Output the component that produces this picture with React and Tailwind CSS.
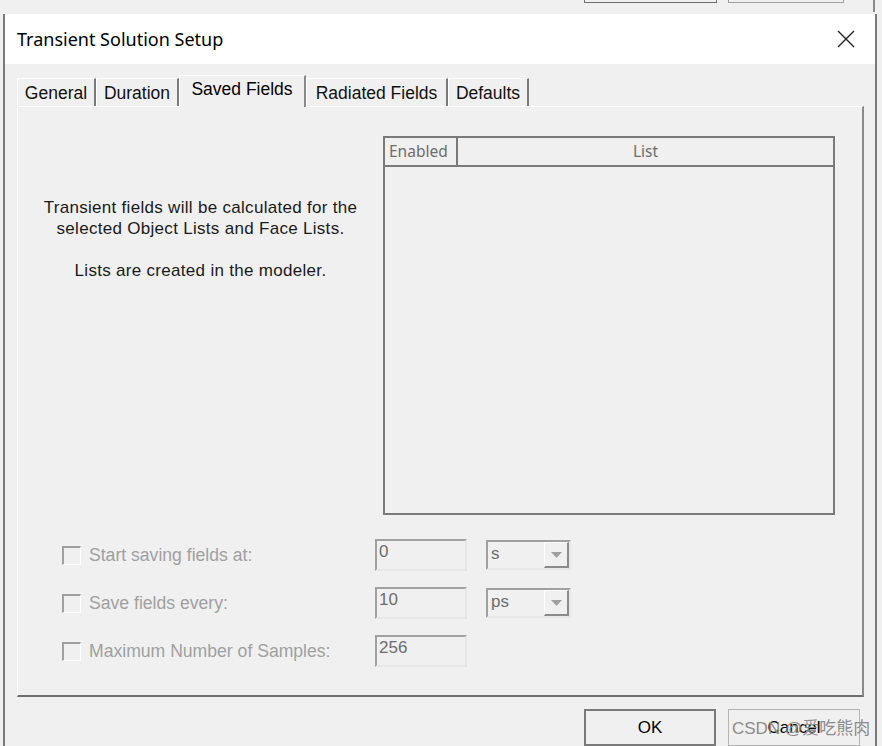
import React from 'react';

const TABS = [
  { label: 'General', w: 'w-[79px]' },
  { label: 'Duration', w: 'w-[83px]' },
  { label: 'Saved Fields', w: 'w-[127px]', active: true },
  { label: 'Radiated Fields', w: 'w-[142px]' },
  { label: 'Defaults', w: 'w-[81px]' },
];

const ROWS = [
  { label: 'Start saving fields at:', value: '0', unit: 's' },
  { label: 'Save fields every:', value: '10', unit: 'ps' },
  { label: 'Maximum Number of Samples:', value: '256' },
];

function Tab({ label, w, active }) {
  if (active) {
    return (
      <div
        className={`${w} h-[32px] -mb-[1px] relative z-10 flex items-center justify-center bg-[#f0f0f0] border-t border-l border-white border-r-2 border-r-[#8a8a8a] text-[17.5px] text-black pb-[4px]`}
      >
        {label}
      </div>
    );
  }
  return (
    <div
      className={`${w} h-[28px] flex items-center justify-center border-t border-l border-white border-r-2 border-r-[#7a7a7a] text-[17.5px] text-[#111] pt-[1px]`}
    >
      {label}
    </div>
  );
}

function Checkbox() {
  return (
    <div className="w-[19px] h-[19px] border-t-2 border-l-2 border-[#a0a0a0] border-b border-r border-b-white border-r-white bg-[#f0f0f0]" />
  );
}

function TextBox({ value }) {
  return (
    <div className="w-[92px] h-[32px] border-t-2 border-l-2 border-[#a0a0a0] border-b-2 border-r-2 border-b-[#e8e8e8] border-r-[#e8e8e8] bg-[#f0f0f0] px-[2px] text-[17px] leading-[22px] text-[#6d6d6d]">
      {value}
    </div>
  );
}

function Combo({ value }) {
  return (
    <div className="w-[85px] h-[30px] flex border-t-2 border-l-2 border-[#a0a0a0] border-b-2 border-r-2 border-b-[#e8e8e8] border-r-[#e8e8e8] bg-[#f0f0f0]">
      <div className="flex-1 pl-[3px] text-[17px] leading-[24px] text-[#6d6d6d]">{value}</div>
      <div className="w-[25px] flex items-center justify-center border-t border-l border-white border-b-2 border-r-2 border-b-[#8a8a8a] border-r-[#8a8a8a]">
        <svg width="11" height="6" viewBox="0 0 11 6">
          <polygon points="0,0 11,0 5.5,6" fill="#a0a0a0" />
        </svg>
      </div>
    </div>
  );
}

export default function App() {
  return (
    <div
      className="w-[882px] h-[746px] overflow-hidden bg-[#f0f0f0] flex flex-col"
      style={{ fontFamily: '"Liberation Sans", Arial, sans-serif' }}
    >
      {/* parent window edge behind the dialog */}
      <div className="h-[14px] flex shrink-0">
        <div className="ml-[584px] w-[133px] h-[3px] border-x border-b border-[#6e6e6e]" />
        <div className="ml-[11px] w-[116px] h-[3px] border-x border-b border-[#a0a0a0]" />
        <div className="ml-[29px] w-[2px] h-[12px] bg-[#8a8a8a]" />
      </div>

      <div className="ml-[3px] w-[874px] flex-1 flex flex-col border-l-2 border-r-2 border-[#7a7a7a]">
        {/* title bar */}
        <div className="h-[50px] shrink-0 bg-white flex items-center justify-between pl-[12px] pr-[20px]">
          <span
            className="text-[18px] text-black"
            style={{ fontFamily: '"Noto Sans", "Open Sans", sans-serif' }}
          >
            Transient Solution Setup
          </span>
          <svg width="18" height="18" viewBox="0 0 18 18">
            <path d="M1 1 L17 17 M17 1 L1 17" stroke="#222" strokeWidth="1.4" fill="none" />
          </svg>
        </div>

        <div className="flex-1 flex flex-col bg-[#f0f0f0] pt-[11px]">
          {/* tabs */}
          <div className="ml-[12px] flex items-end">
            {TABS.map((t) => (
              <Tab key={t.label} {...t} />
            ))}
          </div>

          {/* tab panel */}
          <div className="ml-[12px] w-[847px] h-[591px] border-t border-l border-white border-r-2 border-b-2 border-r-[#8a8a8a] border-b-[#6e6e6e] flex flex-col">
            <div className="flex pt-[29px]">
              <div className="flex-1 pt-[61px] text-center text-[17px] tracking-[0.3px] leading-[21px] text-[#1a1a1a]">
                <p>Transient fields will be calculated for the</p>
                <p>selected Object Lists and Face Lists.</p>
                <p className="mt-[21px]">Lists are created in the modeler.</p>
              </div>
              <div className="mr-[27px] w-[452px] h-[379px] border-2 border-[#7a7a7a] flex flex-col">
                <div
                  className="h-[29px] flex border-b-2 border-[#7a7a7a] text-[15.5px] text-[#6d6d6d]"
                  style={{ fontFamily: '"Noto Sans", "Open Sans", sans-serif' }}
                >
                  <div className="w-[73px] border-r-2 border-[#7a7a7a] flex items-center pl-[4px]">Enabled</div>
                  <div className="flex-1 flex items-center justify-center">List</div>
                </div>
              </div>
            </div>

            <div className="mt-[24px] flex flex-col gap-[16px]">
              {ROWS.map((r) => (
                <div key={r.label} className="h-[32px] flex items-center">
                  <div className="ml-[44px] w-[27px]">
                    <Checkbox />
                  </div>
                  <div className="w-[286px] text-[17.6px] text-[#a0a0a0]">{r.label}</div>
                  <TextBox value={r.value} />
                  {r.unit && (
                    <div className="ml-[19px]">
                      <Combo value={r.unit} />
                    </div>
                  )}
                </div>
              ))}
            </div>
          </div>

          {/* buttons */}
          <div className="mt-[12px] flex justify-end pr-[15px] gap-[12px]">
            <button className="w-[132px] h-[37px] border-2 border-[#7a7a7a] bg-[#f0f0f0] text-[17px] text-black">
              OK
            </button>
            <div className="relative">
              <button className="w-[132px] h-[37px] border border-[#b5b5b5] bg-[#f0f0f0] text-[17px] text-black">
                Cancel
              </button>
              <span
                className="absolute left-[4px] top-[7px] text-[17px] text-[#8c8c8c] whitespace-nowrap"
                style={{ fontFamily: '"Liberation Sans", "Noto Sans CJK SC", sans-serif' }}
              >
                CSDN @爱吃熊肉
              </span>
            </div>
          </div>
        </div>
      </div>
    </div>
  );
}
